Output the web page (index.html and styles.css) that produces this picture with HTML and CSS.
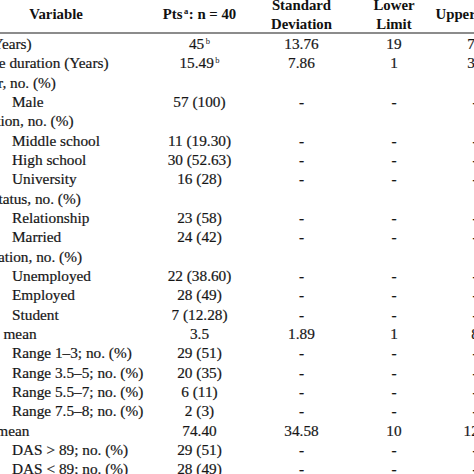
FILE: index.html
```html
<!DOCTYPE html>
<html>
<head>
<meta charset="utf-8">
<link rel="stylesheet" href="styles.css">
</head>
<body>
<div class="tbl">
  <div class="head">
    <div class="th one"><span>Variable</span></div>
    <div class="th one"><span>Pts<sup class="sup">a</sup>: n = 40</span></div>
    <div class="th two"><span>Standard<br>Deviation</span></div>
    <div class="th two"><span>Lower<br>Limit</span></div>
    <div class="th one"><span class="nw">Upper Limit</span></div>
  </div>
  <div class="row"><div class="lbl">Age (Years)</div><div class="td">45<sup class="sup">b</sup></div><div class="td">13.76</div><div class="td">19</div><div class="td">76</div></div>
  <div class="row"><div class="lbl">Disease duration (Years)</div><div class="td">15.49<sup class="sup">b</sup></div><div class="td">7.86</div><div class="td">1</div><div class="td">35</div></div>
  <div class="row"><div class="lbl">Gender, no. (%)</div><div class="td"></div><div class="td"></div><div class="td"></div><div class="td"></div></div>
  <div class="row"><div class="lbl sub">Male</div><div class="td">57 (100)</div><div class="td">-</div><div class="td">-</div><div class="td">-</div></div>
  <div class="row"><div class="lbl">Education, no. (%)</div><div class="td"></div><div class="td"></div><div class="td"></div><div class="td"></div></div>
  <div class="row"><div class="lbl sub">Middle school</div><div class="td">11 (19.30)</div><div class="td">-</div><div class="td">-</div><div class="td">-</div></div>
  <div class="row"><div class="lbl sub">High school</div><div class="td">30 (52.63)</div><div class="td">-</div><div class="td">-</div><div class="td">-</div></div>
  <div class="row"><div class="lbl sub">University</div><div class="td">16 (28)</div><div class="td">-</div><div class="td">-</div><div class="td">-</div></div>
  <div class="row"><div class="lbl">Civil status, no. (%)</div><div class="td"></div><div class="td"></div><div class="td"></div><div class="td"></div></div>
  <div class="row"><div class="lbl sub">Relationship</div><div class="td">23 (58)</div><div class="td">-</div><div class="td">-</div><div class="td">-</div></div>
  <div class="row"><div class="lbl sub">Married</div><div class="td">24 (42)</div><div class="td">-</div><div class="td">-</div><div class="td">-</div></div>
  <div class="row"><div class="lbl">Occupation, no. (%)</div><div class="td"></div><div class="td"></div><div class="td"></div><div class="td"></div></div>
  <div class="row"><div class="lbl sub">Unemployed</div><div class="td">22 (38.60)</div><div class="td">-</div><div class="td">-</div><div class="td">-</div></div>
  <div class="row"><div class="lbl sub">Employed</div><div class="td">28 (49)</div><div class="td">-</div><div class="td">-</div><div class="td">-</div></div>
  <div class="row"><div class="lbl sub">Student</div><div class="td">7 (12.28)</div><div class="td">-</div><div class="td">-</div><div class="td">-</div></div>
  <div class="row"><div class="lbl">HADS mean</div><div class="td">3.5</div><div class="td">1.89</div><div class="td">1</div><div class="td">8</div></div>
  <div class="row"><div class="lbl sub">Range 1–3; no. (%)</div><div class="td">29 (51)</div><div class="td">-</div><div class="td">-</div><div class="td">-</div></div>
  <div class="row"><div class="lbl sub">Range 3.5–5; no. (%)</div><div class="td">20 (35)</div><div class="td">-</div><div class="td">-</div><div class="td">-</div></div>
  <div class="row"><div class="lbl sub">Range 5.5–7; no. (%)</div><div class="td">6 (11)</div><div class="td">-</div><div class="td">-</div><div class="td">-</div></div>
  <div class="row"><div class="lbl sub">Range 7.5–8; no. (%)</div><div class="td">2 (3)</div><div class="td">-</div><div class="td">-</div><div class="td">-</div></div>
  <div class="row"><div class="lbl">DAS, mean</div><div class="td">74.40</div><div class="td">34.58</div><div class="td">10</div><div class="td">124</div></div>
  <div class="row"><div class="lbl sub">DAS &gt; 89; no. (%)</div><div class="td">29 (51)</div><div class="td">-</div><div class="td">-</div><div class="td">-</div></div>
  <div class="row"><div class="lbl sub">DAS &lt; 89; no. (%)</div><div class="td">28 (49)</div><div class="td">-</div><div class="td">-</div><div class="td">-</div></div>
</div>
</body>
</html>
```

FILE: styles.css
```css
html, body {
  margin: 0;
  padding: 0;
  background: #ffffff;
  overflow: hidden;
}
body {
  width: 474px;
  height: 474px;
  font-family: "Liberation Serif", "Times New Roman", serif;
  color: #161616;
}
.tbl {
  margin-left: -42px;
  margin-top: -4.5px;
  width: 562px;
}
.head, .row {
  display: grid;
  grid-template-columns: 196px 91px 113px 72px 90px;
}
.head {
  height: 36.5px;
  border-bottom: 2px solid #8c8c8c;
  font-weight: bold;
  font-size: 14.8px;
  line-height: 19.3px;
  color: #111111;
}
.th {
  display: flex;
  flex-direction: column;
  align-items: center;
  justify-content: center;
  text-align: center;
}
.th.two {
  justify-content: flex-end;
}
.th.two span {
  margin-bottom: -2.1px;
}
.th.one span {
  margin-top: 2.7px;
}
.nw {
  white-space: nowrap;
}
.row {
  font-size: 15.3px;
  line-height: 19.33px;
  -webkit-text-stroke: 0.2px #161616;
}
.td {
  text-align: center;
  white-space: nowrap;
}
.lbl {
  text-align: left;
  white-space: nowrap;
}
.sub {
  padding-left: 54px;
}
.sup {
  font-size: 8.5px;
  line-height: 0;
  vertical-align: 5px;
  margin-left: 1.5px;
  font-weight: normal;
  -webkit-text-stroke: 0;
}
.head .sup {
  font-weight: bold;
  margin-right: 0.5px;
}
```
